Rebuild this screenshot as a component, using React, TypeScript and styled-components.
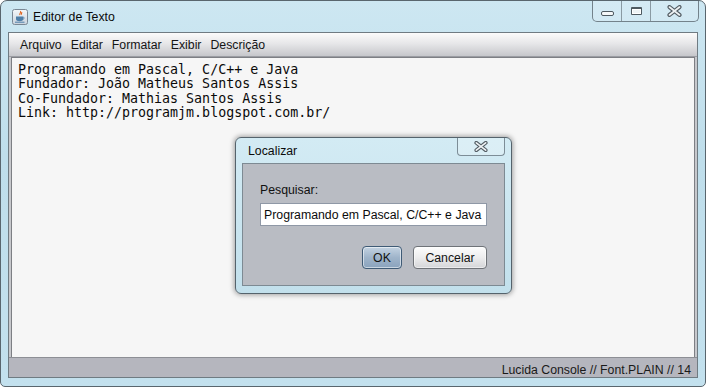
import React from 'react';
import styled, { createGlobalStyle } from 'styled-components';

const GlobalStyle = createGlobalStyle`
    html, body {
        margin: 0;
        padding: 0;
        background: #ffffff;
    }
    body {
        font-family: "Liberation Sans", Arial, sans-serif;
        font-size: 12.3px;
        color: #111;
    }
`;

const Window = styled.div`
    position: relative;
    box-sizing: border-box;
    width: 706px;
    height: 387px;
    display: flex;
    flex-direction: column;
    border: 1px solid #59666e;
    border-radius: 7px 7px 5px 5px;
    background: linear-gradient(180deg, #cde7f2 0%, #bfdeeb 40%, #c3e1ee 100%);
    overflow: hidden;
`;

const TitleBar = styled.div`
    height: 31px;
    display: flex;
    align-items: center;
    padding-left: 11px;
`;

const TitleText = styled.span`
    margin-left: 5px;
    font-size: 12.3px;
    color: #0b0b0b;
`;

const Controls = styled.div`
    align-self: flex-start;
    margin: -1px 6px 0 auto;
    display: flex;
    height: 21px;
    border: 1px solid #73828b;
    border-top: none;
    border-radius: 0 0 5px 5px;
    background: rgba(255, 255, 255, 0.15);
`;

const ControlButton = styled.div<{ $w: number; $last?: boolean }>`
    width: ${p => p.$w}px;
    display: flex;
    align-items: center;
    justify-content: center;
    border-right: ${p => (p.$last ? 'none' : '1px solid #8a9aa3')};
`;

const MinGlyph = styled.div`
    width: 11px;
    height: 3px;
    margin-top: 5px;
    border: 1px solid #4e5960;
    border-radius: 2px;
    background: #f4f7f8;
`;

const MaxGlyph = styled.div`
    width: 9px;
    height: 5px;
    border: 1px solid #4e5960;
    border-top-width: 2px;
    border-radius: 1px;
    background: #eef3f5;
    box-shadow: inset 0 0 0 1px #fff;
`;

const Client = styled.div`
    flex: 1;
    margin: 0 7px 8px 7px;
    display: flex;
    flex-direction: column;
    border: 1px solid #6f7b82;
    background: #c7c8cc;
`;

const MenuBar = styled.div`
    height: 23px;
    display: flex;
    align-items: center;
    gap: 9px;
    padding-left: 11px;
    background: linear-gradient(180deg, #fbfbfb 0%, #e7e7e9 45%, #c6c7cb 100%);
    border-bottom: 1px solid #9a9ca2;
`;

const MenuItem = styled.span`
    font-size: 12.3px;
    color: #151515;
`;

const Editor = styled.div`
    flex: 1;
    margin: 0 2px;
    padding: 5px 6px;
    border: 1px solid #7d7f84;
    border-bottom: none;
    background: #f6f6f6;
    font-family: "DejaVu Sans Mono", "Liberation Mono", monospace;
    font-size: 13.3px;
    line-height: 14.3px;
    color: #0a0a0a;
    white-space: pre;
`;

const StatusBar = styled.div`
    height: 19px;
    display: flex;
    align-items: flex-end;
    justify-content: flex-end;
    padding: 0 6px 0 0;
    border-top: 1px solid #8d8f95;
    background: #b5b6be;
    font-size: 12.3px;
    color: #1a1a1a;
`;

const Dialog = styled.div`
    position: absolute;
    left: 234px;
    top: 136px;
    width: 277px;
    height: 157px;
    box-sizing: border-box;
    display: flex;
    flex-direction: column;
    padding: 0 6px 7px 6px;
    border: 1px solid #55636c;
    border-radius: 6px;
    background: linear-gradient(180deg, #d3ebf4 0%, #c2e0ec 100%);
    box-shadow: 0 0 5px 1px rgba(0, 0, 0, 0.35);
`;

const DialogTitle = styled.div`
    height: 25px;
    display: flex;
    align-items: center;
    padding-left: 1px;
`;

const DialogClose = styled.div`
    align-self: flex-start;
    margin-left: auto;
    width: 46px;
    height: 17px;
    display: flex;
    align-items: center;
    justify-content: center;
    border: 1px solid #7d8d97;
    border-top: none;
    border-radius: 0 0 4px 4px;
    background: rgba(255, 255, 255, 0.2);
`;

const DialogBody = styled.div`
    flex: 1;
    display: flex;
    flex-direction: column;
    padding: 19px 17px 0 17px;
    border: 1px solid #7d8a93;
    background: #b9bcc3;
`;

const Label = styled.div`
    height: 14px;
    line-height: 14px;
    font-size: 12.3px;
    color: #111;
`;

const Field = styled.div`
    margin-top: 6px;
    height: 21px;
    display: flex;
    align-items: center;
    padding-left: 3px;
    border: 1px solid #8f98a6;
    background: #ffffff;
    font-size: 12.3px;
    color: #0c0c0c;
    white-space: nowrap;
    overflow: hidden;
`;

const ButtonRow = styled.div`
    margin-top: 20px;
    display: flex;
    justify-content: flex-end;
    gap: 11px;
`;

const Button = styled.div<{ $primary?: boolean; $w: number }>`
    width: ${p => p.$w}px;
    height: 23px;
    box-sizing: border-box;
    display: flex;
    align-items: center;
    justify-content: center;
    border: 1px solid ${p => (p.$primary ? '#3f5b76' : '#6f7378')};
    border-radius: 4px;
    background: ${p =>
        p.$primary
            ? 'linear-gradient(180deg, #c4d3e2 0%, #9fb4ca 50%, #8aa3bd 100%)'
            : 'linear-gradient(180deg, #fdfdfd 0%, #ededee 50%, #d4d5d8 100%)'};
    box-shadow: inset 0 0 0 1px rgba(255, 255, 255, 0.55);
    font-size: 12.3px;
    color: #121212;
`;

const JavaIcon = () => (
    <svg width="16" height="16" viewBox="0 0 16 16">
        <defs>
            <linearGradient id="jbg" x1="0" y1="0" x2="0" y2="1">
                <stop offset="0" stopColor="#f4f7fa" />
                <stop offset="1" stopColor="#c9d3dd" />
            </linearGradient>
        </defs>
        <rect x="0.5" y="0.5" width="15" height="15" rx="2" fill="url(#jbg)" stroke="#7a8794" />
        <path d="M8.2 2.2c1.6 1.2-1.4 2.2-.2 3.8M9.6 3c.8.9-.8 1.6 0 2.6" stroke="#e0601a" strokeWidth="1.1" fill="none" />
        <path d="M4 7.5h7.2v2.6c0 1.4-1.5 2.2-3.6 2.2S4 11.5 4 10.1z" fill="#4f7fa8" />
        <path d="M11.2 8.2c1.3 0 1.5 1.6-.2 2" stroke="#4f7fa8" strokeWidth="0.9" fill="none" />
        <path d="M3 13.2h9.5" stroke="#4f7fa8" strokeWidth="1" />
    </svg>
);

const CloseGlyph = ({ w, h }: { w: number; h: number }) => (
    <svg width={w} height={h} viewBox="0 0 14 11">
        <path d="M2.3 1.8l9.4 7.4M11.7 1.8l-9.4 7.4" stroke="#535d64" strokeWidth="3.8" strokeLinecap="round" />
        <path d="M2.3 1.8l9.4 7.4M11.7 1.8l-9.4 7.4" stroke="#eef2f4" strokeWidth="1.6" strokeLinecap="round" />
    </svg>
);

const menus = ['Arquivo', 'Editar', 'Formatar', 'Exibir', 'Descrição'];

const content = [
    'Programando em Pascal, C/C++ e Java',
    'Fundador: João Matheus Santos Assis',
    'Co-Fundador: Mathias Santos Assis',
    'Link: http://programjm.blogspot.com.br/',
].join('\n');

const App = () => {
    return (
        <>
            <GlobalStyle />
            <Window>
                <TitleBar>
                    <JavaIcon />
                    <TitleText>Editor de Texto</TitleText>
                    <Controls>
                        <ControlButton $w={28}>
                            <MinGlyph />
                        </ControlButton>
                        <ControlButton $w={28}>
                            <MaxGlyph />
                        </ControlButton>
                        <ControlButton $w={47} $last>
                            <CloseGlyph w={15} h={12} />
                        </ControlButton>
                    </Controls>
                </TitleBar>
                <Client>
                    <MenuBar>
                        {menus.map(m => (
                            <MenuItem key={m}>{m}</MenuItem>
                        ))}
                    </MenuBar>
                    <Editor>{content}</Editor>
                    <StatusBar>Lucida Console // Font.PLAIN // 14</StatusBar>
                </Client>

                <Dialog>
                    <DialogTitle>
                        <TitleText>Localizar</TitleText>
                        <DialogClose>
                            <CloseGlyph w={14} h={11} />
                        </DialogClose>
                    </DialogTitle>
                    <DialogBody>
                        <Label>Pesquisar:</Label>
                        <Field>Programando em Pascal, C/C++ e Java</Field>
                        <ButtonRow>
                            <Button $primary $w={40}>OK</Button>
                            <Button $w={74}>Cancelar</Button>
                        </ButtonRow>
                    </DialogBody>
                </Dialog>
            </Window>
        </>
    );
};

export default App;
